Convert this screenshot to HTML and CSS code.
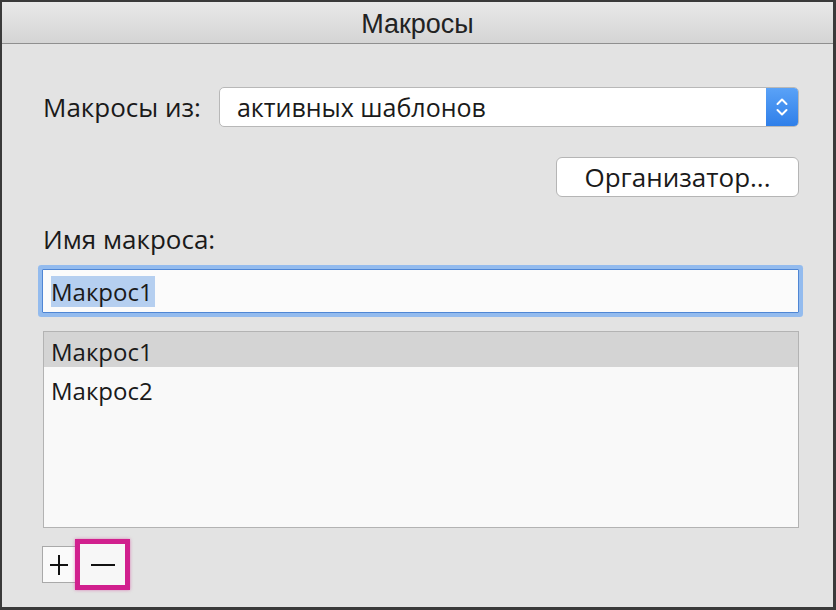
FILE: index.html
```html
<!DOCTYPE html>
<html lang="ru">

<head>
    <meta charset="UTF-8">
    <title>Макросы</title>
    <link rel="stylesheet" href="styles.css">
</head>

<body>
    <div class="window">
        <div class="titlebar">Макросы</div>

        <div class="content">
            <div class="source-row">
                <span class="label">Макросы из:</span>
                <div class="select">
                    <span class="select-value">активных шаблонов</span>
                    <span class="stepper">
                        <svg width="14" height="22" viewBox="0 0 14 22">
                            <path d="M2.5 8 L7 3.5 L11.5 8" fill="none" stroke="#fff" stroke-width="2" stroke-linecap="round" stroke-linejoin="round"/>
                            <path d="M2.5 14 L7 18.5 L11.5 14" fill="none" stroke="#fff" stroke-width="2" stroke-linecap="round" stroke-linejoin="round"/>
                        </svg>
                    </span>
                </div>
            </div>

            <div class="organizer-row">
                <button class="btn">Организатор...</button>
            </div>

            <div class="label name-label">Имя макроса:</div>
            <div class="name-field"><span class="selected">Макрос1</span></div>

            <div class="macro-list">
                <div class="macro-item active">Макрос1</div>
                <div class="macro-item">Макрос2</div>
            </div>

            <div class="list-buttons">
                <button class="sq-btn plus" title="Добавить">
                    <svg width="20" height="22" viewBox="0 0 20 22">
                        <path d="M10 1 V21 M1 11 H19" stroke="#111" stroke-width="2" fill="none"/>
                    </svg>
                </button>
                <button class="sq-btn minus" title="Удалить">
                    <svg width="24" height="4" viewBox="0 0 24 4">
                        <path d="M0 2 H24" stroke="#111" stroke-width="2" fill="none"/>
                    </svg>
                </button>
            </div>
        </div>
    </div>
</body>

</html>
```

FILE: styles.css
```css
html,
body {
    margin: 0;
    padding: 0;
}

body {
    background-color: #2f2f2f;
    font-family: "Open Sans", "Liberation Sans", sans-serif;
    color: #1a1a1a;
}

.window {
    width: 836px;
    height: 610px;
    box-sizing: border-box;
    border: 2px solid #3a3a3a;
    border-bottom-width: 3px;
    border-right-width: 3px;
    background-color: #e3e3e3;
    display: flex;
    flex-direction: column;
}

.titlebar {
    height: 39px;
    padding-top: 2px;
    border-bottom: 1px solid #8f8f8f;
    background: linear-gradient(#e9e9e9, #d4d4d4);
    text-align: center;
    font-family: "Liberation Sans", sans-serif;
    font-size: 27px;
    line-height: 41px;
    color: #222;
}

.content {
    padding: 43px 34px 0 41px;
    display: flex;
    flex-direction: column;
}

.label {
    font-size: 26px;
    line-height: 26px;
}

.source-row {
    display: flex;
    align-items: center;
    gap: 18px;
}

.select {
    flex: 1;
    height: 40px;
    box-sizing: border-box;
    border: 1px solid #b8b8b8;
    border-radius: 5px;
    background-color: #fff;
    display: flex;
    align-items: center;
    overflow: hidden;
}

.select-value {
    flex: 1;
    padding-left: 17px;
    font-size: 25px;
}

.stepper {
    width: 32px;
    height: 100%;
    background: linear-gradient(#5aa2f7, #2f7fe9);
    display: flex;
    align-items: center;
    justify-content: center;
}

.organizer-row {
    display: flex;
    justify-content: flex-end;
    margin-top: 30px;
}

.btn {
    width: 243px;
    height: 40px;
    border: 1px solid #b5b5b5;
    border-radius: 6px;
    background-color: #fff;
    font-family: "Open Sans", "Liberation Sans", sans-serif;
    font-size: 26px;
    color: #1a1a1a;
    padding: 0;
}

.name-label {
    margin-top: 29px;
}

.name-field {
    margin-top: 17px;
    margin-left: -1px;
    height: 44px;
    box-sizing: border-box;
    border: 1px solid #4f86d4;
    box-shadow: 0 0 0 4px #93bbee;
    border-radius: 1px;
    background-color: #fbfbfb;
    display: flex;
    align-items: center;
    padding-left: 8px;
    font-size: 24px;
}

.selected {
    background-color: #b5cff0;
    line-height: 31px;
    padding-right: 2px;
}

.macro-list {
    margin-top: 18px;
    height: 197px;
    box-sizing: border-box;
    border: 1px solid #b3b3b3;
    background-color: #f9f9f9;
}

.macro-item {
    height: 48px;
    line-height: 48px;
    padding-left: 7px;
    font-size: 24px;
}

.macro-item.active {
    height: 35px;
    line-height: 39px;
    background-color: #d4d4d4;
}

.list-buttons {
    display: flex;
    align-items: center;
    margin-top: 11px;
    margin-left: -1px;
}

.sq-btn {
    width: 36px;
    height: 37px;
    box-sizing: border-box;
    border: 1px solid #a9a9a9;
    background-color: #fafafa;
    padding: 0 3px 0 0;
    display: flex;
    align-items: center;
    justify-content: center;
}

.sq-btn.minus {
    width: 55px;
    height: 51px;
    margin-left: -3px;
    padding: 0;
    border: 5px solid #d1208e;
    box-shadow: 0 0 3px rgba(209, 32, 142, 0.5);
    background-color: #f7f7f7;
}
```
